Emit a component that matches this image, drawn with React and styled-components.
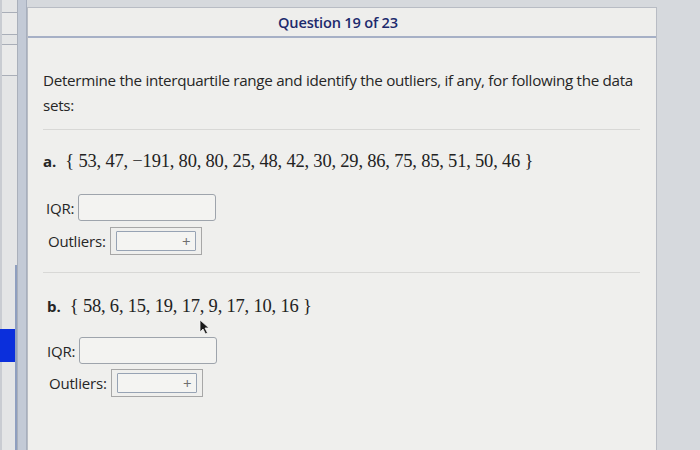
import React from "react";
import styled, { createGlobalStyle } from "styled-components";

const GlobalStyle = createGlobalStyle`
  html, body {
    margin: 0;
    padding: 0;
    background: #d6d9dd;
  }
  body {
    font-family: "Open Sans", "Noto Sans", sans-serif;
    color: #2a2a2a;
  }
`;

const Page = styled.div`
  display: flex;
  width: 700px;
  height: 450px;
  overflow: hidden;
  background: #d6d9dd;
`;

const Rail = styled.div`
  width: 15px;
  display: flex;
  flex-direction: column;
  background: #e4e5e6;
  border-left: 2px solid #c9ccd2;
  border-right: 1px solid #aab0bb;
`;

const TabBox = styled.div`
  height: ${(p) => p.h}px;
  margin-top: ${(p) => p.top}px;
  background: #eaeaea;
  border-top: 1px solid #a9aeb8;
  border-bottom: 1px solid #a9aeb8;
`;

const Track = styled.div`
  margin-top: ${(p) => p.top}px;
  flex: 1;
  border-right: 2px solid #8f9fbf;
`;

const Marker = styled.div`
  margin-top: 64px;
  margin-left: -2px;
  width: 15px;
  height: 33px;
  background: #0b2fdc;
`;

const Gutter = styled.div`
  width: 8px;
  background: #c3cad6;
  border-right: 1px solid #a7afbd;
`;

const Card = styled.div`
  margin-top: 7px;
  width: 628px;
  background: #efefed;
  border: 1px solid #b8bcc4;
  border-bottom: none;
  display: flex;
  flex-direction: column;
`;

const Header = styled.div`
  height: 28px;
  display: flex;
  align-items: center;
  justify-content: center;
  border-bottom: 2px solid #a6b0c6;
  background: #eeeeec;
`;

const Title = styled.h1`
  margin: 0 8px 0 0;
  font-size: 14.6px;
  font-weight: 600;
  color: #1d2a6c;
  letter-spacing: -0.2px;
`;

const Body = styled.div`
  padding: 30px 14px 0 15px;
`;

const Prompt = styled.p`
  margin: 0;
  font-size: 15.2px;
  line-height: 25px;
  color: #262626;
  letter-spacing: -0.3px;
`;

const Divider = styled.hr`
  margin: ${(p) => p.top}px 2px 0 0;
  border: none;
  border-top: 1px solid #d8d8d6;
`;

const Part = styled.div`
  padding-left: ${(p) => p.shift}px;
`;

const SetLine = styled.div`
  position: relative;
  margin-top: ${(p) => p.top}px;
  display: flex;
  align-items: baseline;
  height: 22px;
`;

const PartLetter = styled.span`
  font-weight: 700;
  font-size: 15px;
  margin-right: 9px;
  color: #262626;
`;

const SetText = styled.span`
  font-family: "Liberation Serif", "Times New Roman", serif;
  font-size: 18.5px;
  color: #222;
  letter-spacing: -0.2px;
`;

const Row = styled.div`
  display: flex;
  align-items: center;
  margin-top: ${(p) => p.top}px;
  padding-left: ${(p) => p.indent}px;
`;

const Label = styled.span`
  font-size: 15px;
  color: #262626;
  margin-right: 4px;
  letter-spacing: -0.2px;
`;

const Input = styled.div`
  width: 136px;
  height: 25px;
  border: 1px solid #9ea4ac;
  border-radius: 3px;
  background: #f3f3f1;
`;

const ListFrame = styled.div`
  padding: 3px 5px 3px 5px;
  border: 1px solid #a7a7a7;
  background: #efefed;
`;

const ListInput = styled.div`
  width: 80px;
  height: 20px;
  border: 1px solid #97a3b4;
  border-radius: 1px;
  display: flex;
  align-items: center;
  justify-content: flex-end;
  padding-right: 4px;
  box-sizing: border-box;
  background: #f4f4f2;
  color: #6f6f6f;
  font-size: 15px;
  line-height: 1;
`;

const Cursor = styled.svg`
  position: absolute;
  left: ${(p) => p.x}px;
  top: ${(p) => p.y}px;
`;

const Backdrop = styled.div`
  flex: 1;
`;

const Answer = ({ top, indent, gap }) => (
  <>
    <Row top={top} indent={indent}>
      <Label>IQR:</Label>
      <Input />
    </Row>
    <Row top={gap} indent={indent + 2}>
      <Label>Outliers:</Label>
      <ListFrame>
        <ListInput>+</ListInput>
      </ListFrame>
    </Row>
  </>
);

export default function App() {
  return (
    <Page>
      <GlobalStyle />
      <Rail>
        <TabBox top={12} h={21} />
        <TabBox top={9} h={30} />
        <Track top={189}>
          <Marker />
        </Track>
      </Rail>
      <Gutter />
      <Card>
        <Header>
          <Title>Question 19 of 23</Title>
        </Header>
        <Body>
          <Prompt>
            Determine the interquartile range and identify the outliers, if any, for following the data
            sets:
          </Prompt>
          <Divider top={11} />
          <Part shift={0}>
            <SetLine top={21}>
              <PartLetter>a.</PartLetter>
              <SetText>{"{ 53, 47, \u2212191, 80, 80, 25, 48, 42, 30, 29, 86, 75, 85, 51, 50, 46 }"}</SetText>
            </SetLine>
            <Answer top={21} indent={3} gap={6} />
          </Part>
          <Divider top={17} />
          <Part shift={4}>
            <SetLine top={23}>
              <PartLetter>b.</PartLetter>
              <SetText>{"{ 58, 6, 15, 19, 17, 9, 17, 10, 16 }"}</SetText>
              <Cursor x={152} y={23} width="12" height="16" viewBox="0 0 12 16">
                <path d="M1 1 L1 13 L4 10 L6.5 15 L8.5 14 L6 9 L10 9 Z" fill="#1a1a1a" stroke="#f4f4f4" strokeWidth="0.8" />
              </Cursor>
            </SetLine>
            <Answer top={19} indent={0} gap={5} />
          </Part>
        </Body>
      </Card>
      <Backdrop />
    </Page>
  );
}
